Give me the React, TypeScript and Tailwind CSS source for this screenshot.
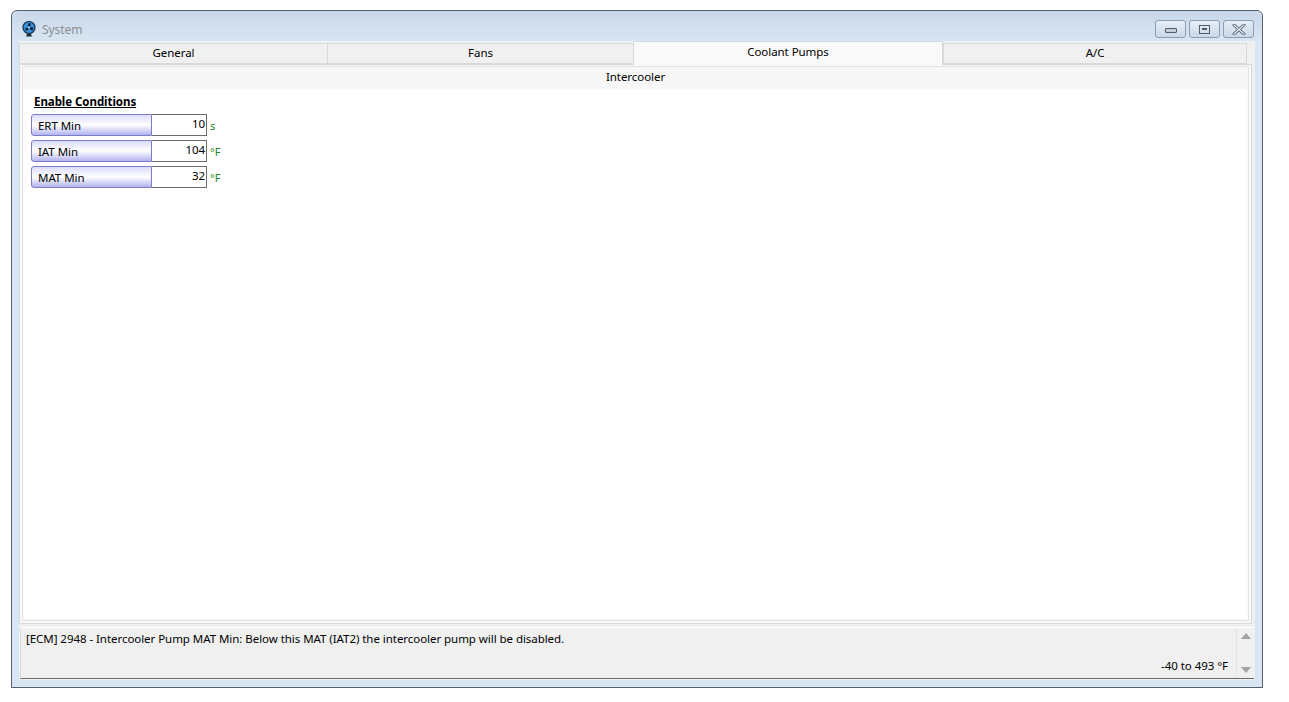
const font = { fontFamily: '"Noto Sans", "Open Sans", sans-serif' };

const tabs = [
  { label: 'General', w: 'w-[308px]' },
  { label: 'Fans', w: 'w-[306px]' },
  { label: 'Coolant Pumps', w: 'w-[310px]', active: true },
  { label: 'A/C', w: 'w-[304px]' },
];

const rows = [
  { label: 'ERT Min', value: '10', unit: 's' },
  { label: 'IAT Min', value: '104', unit: '°F' },
  { label: 'MAT Min', value: '32', unit: '°F' },
];

function FanIcon() {
  return (
    <svg width="14" height="17" viewBox="0 0 14 17" className="shrink-0">
      <path d="M4 15.5 L10 15.5 L9 13 L5 13 Z" fill="#1d2b3a" />
      <rect x="6" y="11" width="2" height="3" fill="#1d2b3a" />
      <circle cx="7" cy="6.5" r="6" fill="#3b8fd6" stroke="#16324f" strokeWidth="1.2" />
      <path d="M7 6.5 C5 3 6 1.5 8.5 2 C9 4 8.5 5.5 7 6.5 Z" fill="#0d2a48" />
      <path d="M7 6.5 C10.5 5 12 6.5 11 9 C9 9.5 7.8 8.5 7 6.5 Z" fill="#0d2a48" />
      <path d="M7 6.5 C6 10 4 10.5 3 8.5 C3.8 6.5 5.2 6.2 7 6.5 Z" fill="#0d2a48" />
      <circle cx="7" cy="6.5" r="1.1" fill="#bfe0ff" />
    </svg>
  );
}

function CaptionButton({ kind }: { kind: 'min' | 'max' | 'close' }) {
  return (
    <div className="w-[31px] h-[18px] rounded-[3px] border border-[#8c9db2] bg-gradient-to-b from-[#e6eef7] to-[#c9d8e8] flex items-center justify-center">
      {kind === 'min' && <div className="w-[12px] h-[5px] rounded-[1px] border border-[#4f5c6b] bg-[#c4ccd6] mt-[3px]" />}
      {kind === 'max' && (
        <div className="w-[11px] h-[9px] border border-[#4f5c6b] flex items-center justify-center">
          <div className="w-[5px] h-[2px] border border-[#4f5c6b]" />
        </div>
      )}
      {kind === 'close' && (
        <svg width="14" height="11" viewBox="0 0 14 11">
          <path d="M2 1 L12 10 M12 1 L2 10" stroke="#4f5c6b" strokeWidth="3" strokeLinecap="round" />
          <path d="M2 1 L12 10 M12 1 L2 10" stroke="#e8eef5" strokeWidth="1.2" strokeLinecap="round" />
        </svg>
      )}
    </div>
  );
}

export default function App() {
  return (
    <div className="w-[1289px] h-[702px] bg-white text-[11.5px] tracking-[-0.05px] text-black" style={font}>
      <div className="ml-[11px] mt-[10px] w-[1252px] h-[678px] rounded-t-[6px] border border-[#56606b] bg-[#d8e5f2] flex flex-col">
        {/* Title bar */}
        <div className="h-[30px] flex items-start bg-gradient-to-b from-[#c8d8ea] to-[#d8e5f2] rounded-t-[6px]">
          <div className="flex items-center gap-[6px] pl-[10px] pt-[10px]">
            <FanIcon />
            <span className="text-[#8c8f93] text-[12px] leading-none mt-[1px]">System</span>
          </div>
          <div className="ml-auto flex gap-[3px] pt-[9px] pr-[8px]">
            <CaptionButton kind="min" />
            <CaptionButton kind="max" />
            <CaptionButton kind="close" />
          </div>
        </div>

        {/* Client */}
        <div className="mx-[7px] bg-[#f0f0f0] flex-1 flex flex-col">
          {/* Tabs */}
          <div className="flex items-end h-[23px]">
            {tabs.map((t, i) =>
              t.active ? (
                <div
                  key={t.label}
                  className={`${t.w} h-[24px] -mb-px bg-[#f9f9f9] border border-b-0 border-[#d9d9d9] flex items-start justify-center pt-[1px] relative z-10`}
                >
                  {t.label}
                </div>
              ) : (
                <div
                  key={t.label}
                  className={`${t.w} h-[21px] bg-[#f0f0f0] border-y border-l border-[#d9d9d9] ${i === tabs.length - 1 ? 'border-r' : ''} flex items-center justify-center pb-[2px]`}
                >
                  {t.label}
                </div>
              )
            )}
          </div>

          {/* Tab panel */}
          <div className="w-[1233px] h-[560px] border border-[#d9d9d9] bg-[#f9f9f9] px-[2px] pt-px pb-[2px] flex flex-col">
            <div className="flex-1 border border-[#e3e3e3] flex flex-col">
              <div className="h-[22px] bg-[#f7f7f7] flex items-center justify-center pb-[3px]">Intercooler</div>
              <div className="flex-1 bg-white mx-[1px] mb-[1px] pl-[7px] pt-[5px]">
                <div className="font-bold underline leading-[16px] mb-[4px] ml-[3px]">Enable Conditions</div>
                <div className="flex flex-col gap-[4px]">
                  {rows.map((r) => (
                    <div key={r.label} className="flex items-start">
                      <div className="w-[121px] h-[22px] rounded-l-[3px] border border-[#7c7ccc] bg-gradient-to-b from-[#dcdcfa] via-[#ffffff] to-[#b3b3ee] flex items-center pl-[6px] pt-[1px]">
                        {r.label}
                      </div>
                      <div className="w-[55px] h-[22px] border border-[#6b6b6b] border-l-0 bg-white flex items-start justify-end pr-[1px] leading-[18px]">
                        {r.value}
                      </div>
                      <span className="ml-[3px] mt-[4px] text-[#1f8a1f] text-[11px]">{r.unit}</span>
                    </div>
                  ))}
                </div>
              </div>
            </div>
          </div>

          {/* Description */}
          <div className="mt-[3px] ml-[1px] w-[1234px] h-[52px] border-t border-t-[#ffffff] border-l border-l-[#dadada] border-b border-b-[#6c6c6c] flex">
            <div className="flex-1 flex flex-col justify-between pl-[5px] pt-[2px] pb-[4px]">
              <div>[ECM] 2948 - Intercooler Pump MAT Min: Below this MAT (IAT2) the intercooler pump will be disabled.</div>
              <div className="self-end pr-[8px]">-40 to 493 °F</div>
            </div>
            <div className="w-[18px] border-l border-[#e4e4e4] flex flex-col items-center justify-between py-[5px]">
              <svg width="10" height="6" viewBox="0 0 10 6"><path d="M0 6 L5 0 L10 6 Z" fill="#a3a3a3" /></svg>
              <svg width="10" height="6" viewBox="0 0 10 6"><path d="M0 0 L5 6 L10 0 Z" fill="#a3a3a3" /></svg>
            </div>
          </div>
        </div>
        <div className="h-[7px]" />
      </div>
    </div>
  );
}
